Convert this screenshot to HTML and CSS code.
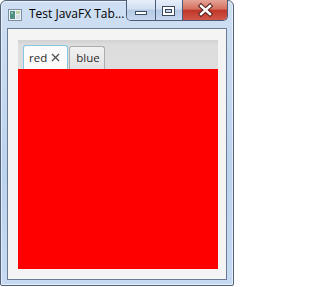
FILE: index.html
```html
<!DOCTYPE html>
<html>
<head>
<meta charset="utf-8">
<link rel="stylesheet" href="styles.css">
</head>
<body>
<div class="window">
  <div class="titlebar">
    <svg class="app-icon" width="14" height="12" viewBox="0 0 14 12">
      <rect x="0.5" y="0.5" width="13" height="11" fill="#eef2f6" stroke="#7d8ea3"/>
      <rect x="2" y="2" width="5" height="8" fill="#4f8f86"/>
      <rect x="3" y="3" width="2" height="2" fill="#8fc0b0"/>
      <rect x="8" y="2" width="4" height="3" fill="#b7d7a8"/>
      <rect x="8" y="6" width="4" height="4" fill="#d3dde8"/>
    </svg>
    <span class="title">Test JavaFX Tab...</span>
    <div class="caps">
      <div class="cap min">
        <svg width="28" height="20" viewBox="0 0 28 20"><rect x="8.5" y="11.5" width="11" height="3" fill="#fff" stroke="#3c4a60"/></svg>
      </div>
      <div class="cap max">
        <svg width="26" height="20" viewBox="0 0 26 20"><rect x="6.5" y="6.5" width="12" height="9" fill="#fff" stroke="#3c4a60"/><rect x="9.5" y="9.5" width="6" height="3" fill="#c8d6ea" stroke="#3c4a60"/></svg>
      </div>
      <div class="cap close">
        <svg width="44" height="20" viewBox="0 0 44 20"><path d="M18 6L27 14M27 6L18 14" stroke="#5a2420" stroke-width="4.5" stroke-linecap="square"/><path d="M18 6L27 14M27 6L18 14" stroke="#fff" stroke-width="2.4" stroke-linecap="square"/></svg>
      </div>
    </div>
  </div>
  <div class="client">
    <div class="tabpane">
      <div class="tab-header">
        <div class="tab selected"><span>red</span><svg class="tab-close" width="9" height="9" viewBox="0 0 9 9"><path d="M1 1L8 8M8 1L1 8" stroke="#505050" stroke-width="1.3"/></svg></div>
        <div class="tab"><span>blue</span></div>
      </div>
      <div class="tab-content"></div>
    </div>
  </div>
</div>
</body>
</html>
```

FILE: styles.css
```css
body {
  margin: 0;
  background: #ffffff;
  font-family: "Open Sans", "Noto Sans", sans-serif;
}

.window {
  width: 234px;
  height: 286px;
  box-sizing: border-box;
  border: 1px solid #53637b;
  border-radius: 6px 6px 2px 2px;
  background: linear-gradient(#cfdff3, #bcd3ee 60%, #c6daf2);
  box-shadow: inset 0 0 0 1px rgba(255, 255, 255, 0.55);
  display: flex;
  flex-direction: column;
  padding: 0 6px 5px 6px;
}

.titlebar {
  height: 27px;
  display: flex;
  align-items: flex-start;
}

.app-icon {
  margin: 8px 0 0 1px;
  flex: none;
}

.title {
  font-size: 12px;
  line-height: 16px;
  margin: 5px 0 0 7px;
  color: #000;
  white-space: nowrap;
}

.caps {
  margin-left: auto;
  margin-right: -1px;
  margin-top: -1px;
  display: flex;
  height: 20px;
  border: 1px solid #4a5c78;
  border-top: none;
  border-radius: 0 0 5px 5px;
  overflow: hidden;
}

.cap {
  height: 20px;
  display: flex;
}

.cap.min {
  width: 28px;
  background: linear-gradient(#e6eef9, #d2dff1 45%, #b7cae5 50%, #c6d7ee);
}

.cap.max {
  width: 26px;
  border-left: 1px solid #4a5c78;
  background: linear-gradient(#e6eef9, #d2dff1 45%, #b7cae5 50%, #c6d7ee);
}

.cap.close {
  width: 44px;
  border-left: 1px solid #4a5c78;
  background: linear-gradient(#e5a397, #d5715f 45%, #c1372a 52%, #d0584a);
}

.client {
  flex: 1;
  border: 1px solid #6b7b93;
  background: #f4f4f4;
  padding: 11px 8px 10px 10px;
  display: flex;
  flex-direction: column;
}

.tabpane {
  flex: 1;
  display: flex;
  flex-direction: column;
}

.tab-header {
  height: 29px;
  flex: none;
  box-sizing: border-box;
  padding-left: 5px;
  display: flex;
  align-items: flex-end;
  gap: 1px;
  background: linear-gradient(#d2d2d2, #dddddd 5px, #dedede);
}

.tab {
  height: 23px;
  box-sizing: border-box;
  border: 1px solid #adadad;
  border-bottom: none;
  border-radius: 3px 3px 0 0;
  background: linear-gradient(#f2f2f2, #e2e2e2);
  font-size: 11.5px;
  line-height: 22px;
  color: #2a2a2a;
  padding: 0 4px 0 6px;
  display: flex;
  align-items: center;
}

.tab.selected {
  height: 24px;
  border-color: #86c6e3;
  background: #fbfbfb;
  line-height: 23px;
  padding: 0 7px 0 5px;
  gap: 4px;
}

.tab-close {
  flex: none;
}

.tab-content {
  flex: 1;
  background: #ff0000;
}
```
